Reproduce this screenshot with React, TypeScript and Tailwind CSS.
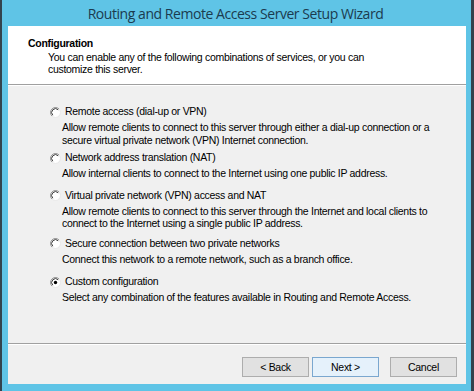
const font = { fontFamily: '"Liberation Sans", Arial, sans-serif' };

interface OptionProps {
  label: string;
  lines: string[];
  checked?: boolean;
  gap: string;
}

const Radio = ({ checked }: { checked?: boolean }) => (
  <svg width="11" height="11" viewBox="0 0 11 11" className="shrink-0">
    <circle cx="5.5" cy="5.5" r="4.8" fill="#ffffff" />
    <path d="M9 2 A4.8 4.8 0 0 0 2 9" fill="none" stroke="#8a8a8a" strokeWidth="1" />
    <path d="M8.2 2.8 A3.8 3.8 0 0 0 2.8 8.2" fill="none" stroke="#3c3c3c" strokeWidth="1" />
    <path d="M2 9 A4.8 4.8 0 0 0 9 2" fill="none" stroke="#e8e8e8" strokeWidth="1" />
    {checked && <circle cx="5.5" cy="5.5" r="1.7" fill="#000000" />}
  </svg>
);

const Option = ({ label, lines, checked, gap }: OptionProps) => (
  <div className={`flex flex-col ${gap}`}>
    <div className="flex items-center gap-[4px] h-[14px]">
      <Radio checked={checked} />
      <span>{label}</span>
    </div>
    <div className="pl-[12px] mt-[2px] leading-[12.5px]">
      {lines.map((l) => (
        <p key={l}>{l}</p>
      ))}
    </div>
  </div>
);

export default function App() {
  return (
    <div
      className="w-[474px] h-[391px] bg-[#5fc4e6] border-l-2 border-r-[3px] border-[#33434d] flex flex-col text-[10.5px] tracking-[-0.3px] whitespace-nowrap text-[#000000]"
      style={font}
    >
      <div className="h-[26px] flex items-center justify-center pr-[2px]">
        <span
          className="text-[14px] text-[#1b3b4f] tracking-[-0.45px]"
          style={{ fontFamily: '"Open Sans", "Noto Sans", sans-serif' }}
        >
          Routing and Remote Access Server Setup Wizard
        </span>
      </div>
      <div className="flex-1 flex flex-col ml-[6px] mr-[5px] mb-[7px] bg-[#f0f0f0]">
        <div className="h-[59px] bg-white border-b border-[#a0a0a0] pl-[20px] pt-[11px] leading-[12px]">
          <p className="font-bold">Configuration</p>
          <div className="pl-[20px] mt-[2px] leading-[12px]">
            <p>You can enable any of the following combinations of services, or you can</p>
            <p>customize this server.</p>
          </div>
        </div>
        <div className="border-t border-white flex-1 flex flex-col pl-[42px] pt-[19px]">
          <Option
            gap="mt-0"
            label="Remote access (dial-up or VPN)"
            lines={[
              "Allow remote clients to connect to this server through either a dial-up connection or a",
              "secure virtual private network (VPN) Internet connection.",
            ]}
          />
          <Option
            gap="mt-[5px]"
            label="Network address translation (NAT)"
            lines={["Allow internal clients to connect to the Internet using one public IP address."]}
          />
          <Option
            gap="mt-[9px]"
            label="Virtual private network (VPN) access and NAT"
            lines={[
              "Allow remote clients to connect to this server through the Internet and local clients to",
              "connect to the Internet using a single public IP address.",
            ]}
          />
          <Option
            gap="mt-[7px]"
            label="Secure connection between two private networks"
            lines={["Connect this network to a remote network, such as a branch office."]}
          />
          <Option
            gap="mt-[10px]"
            label="Custom configuration"
            lines={["Select any combination of the features available in Routing and Remote Access."]}
            checked
          />
        </div>
        <div className="border-t border-[#a0a0a0]">
          <div className="border-t border-white h-[40px] flex items-start justify-end pt-[12px] pr-[9px]">
            <button className="w-[67px] h-[20px] bg-[#e1e1e1] border border-[#adadad] leading-none">
              &lt; Back
            </button>
            <button className="ml-[3px] w-[67px] h-[20px] bg-[#e5f1fb] border border-[#7aa7cf] leading-none">
              Next &gt;
            </button>
            <button className="ml-[11px] w-[67px] h-[20px] bg-[#e1e1e1] border border-[#adadad] leading-none">
              Cancel
            </button>
          </div>
        </div>
      </div>
    </div>
  );
}
